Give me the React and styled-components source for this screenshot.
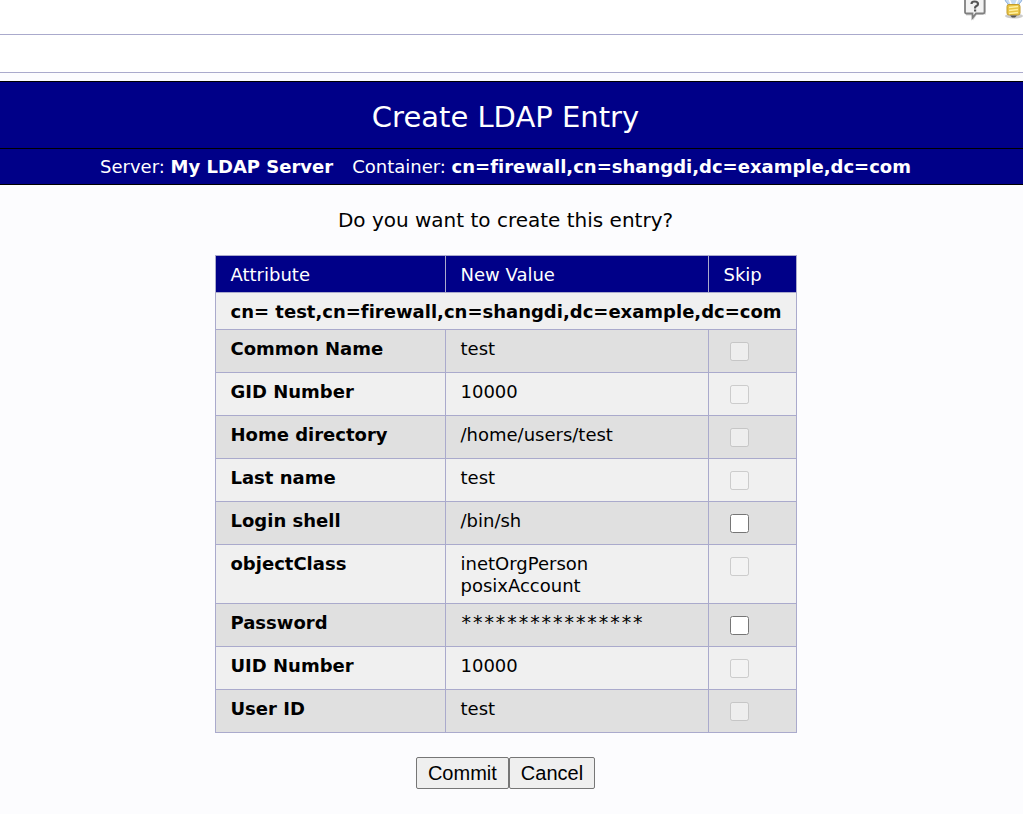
import React from "react";
import styled, { createGlobalStyle } from "styled-components";

const GlobalStyle = createGlobalStyle`
  body {
    margin: 0;
    background: #fcfcfe;
    color: #000;
    font-family: "DejaVu Sans", Verdana, sans-serif;
    font-size: 18px;
    font-variant-ligatures: none;
    line-height: 22px;
  }
`;

const TopBar = styled.header`
  display: flex;
  justify-content: flex-end;
  gap: 17px;
  height: 34px;
  overflow: hidden;
  background: #fff;
  border-bottom: 1px solid #aaaacc;
`;

const IconLink = styled.a`
  display: block;
  height: 24px;

  svg {
    display: block;
  }
`;

const SubBar = styled.div`
  height: 37px;
  margin-bottom: 8px;
  background: #fff;
  border-bottom: 1px solid #aaaacc;
`;

const Title = styled.h1`
  margin: 0;
  padding: 18px 12px 14px 0;
  border-top: 1px solid #000;
  background: #000088;
  color: #fff;
  font-size: 29px;
  font-weight: normal;
  line-height: 34px;
  text-align: center;
`;

const SubTitle = styled.div`
  display: flex;
  justify-content: center;
  gap: 19px;
  padding: 7px 12px 6px 0;
  border-top: 1px solid #000;
  border-bottom: 1px solid #000;
  background: #000088;
  color: #fff;
`;

const Form = styled.form`
  display: flex;
  flex-direction: column;
  align-items: center;
  padding: 23px 12px 24px 0;
`;

const Question = styled.p`
  margin: 0 0 23px;
  font-size: 20px;
  line-height: 24px;
`;

const Table = styled.table`
  border-collapse: collapse;
  border: 1px solid #aaaacc;
`;

const HeadCell = styled.th`
  width: ${(props) => props.$width}px;
  box-sizing: border-box;
  padding: 8px 15px 6px;
  border: 1px solid #aaaacc;
  background: #000088;
  color: #fff;
  font-weight: normal;
  text-align: left;
`;

const Row = styled.tr`
  background: ${(props) => (props.$shaded ? "#e0e0e0" : "#f0f0f0")};
`;

const Cell = styled.td`
  height: 28px;
  padding: 8px 15px 6px;
  border: 1px solid #aaaacc;
  font-weight: ${(props) => (props.$bold ? "bold" : "normal")};
  text-align: left;
  vertical-align: top;
`;

const DnCell = styled(Cell)`
  height: 22px;
  padding-right: 8px;
  white-space: nowrap;
`;

const Value = styled.div`
  height: 22px;
  ${(props) => props.$masked && 'font-family: "DejaVu Sans Mono", monospace; font-size: 19px; line-height: 20px;'}
`;

const Checkbox = styled.input`
  display: block;
  width: 19px;
  height: 19px;
  margin: 4px 6px 5px;
`;

const Buttons = styled.div`
  display: flex;
  margin-top: 24px;
`;

const Button = styled.button`
  height: 32px;
  padding: 0 11px;
  border: 1px solid #767676;
  border-radius: 2px;
  background: #efefef;
  color: #000;
  font-family: "Liberation Sans", Arial, sans-serif;
  font-size: 20px;
`;

const attributes = [
  { name: "Common Name", values: ["test"] },
  { name: "GID Number", values: ["10000"] },
  { name: "Home directory", values: ["/home/users/test"] },
  { name: "Last name", values: ["test"] },
  { name: "Login shell", values: ["/bin/sh"], canSkip: true },
  { name: "objectClass", values: ["inetOrgPerson", "posixAccount"] },
  { name: "Password", values: ["****************"], canSkip: true, masked: true },
  { name: "UID Number", values: ["10000"] },
  { name: "User ID", values: ["test"] },
];

function HelpIcon() {
  return (
    <svg width="24" height="24" viewBox="0 0 24 24">
      <path d="M3 -6H23V14.500H14L10 20.500V15.500H3Z" fill="#bbb" opacity="0.6" />
      <path
        d="M2 -6H21.500V12Q21.500 13.500 20 13.500H13L9.500 18V13.500H3.500Q2 13.500 2 12Z"
        fill="#f3f3f3"
        stroke="#808080"
        strokeWidth="1.800"
      />
      <path d="M8.500 4Q8.500 1.500 11.500 1.500Q15 1.500 15 4Q15 5.500 13 6.300Q12 6.800 12 8.500" fill="none" stroke="#555" strokeWidth="2.200" />
      <rect x="11" y="9.500" width="2.200" height="2" fill="#555" />
    </svg>
  );
}

function BulbIcon() {
  return (
    <svg width="19" height="24" viewBox="0 0 19 24">
      <ellipse cx="10" cy="16" rx="9" ry="2.500" fill="#999" opacity="0.5" />
      <path d="M0 -4Q1 2 4 4V7H15V4Q18 2 19 -4Z" fill="#c6dcf4" stroke="#8aaedb" />
      <path d="M5 -1L7.500 5M14 -1L11.500 5" stroke="#fff" strokeWidth="1.500" />
      <rect x="3" y="4.500" width="13" height="10.500" rx="2" fill="#e9c545" stroke="#c39c2c" />
      <path d="M5 7.500L14 6.500M5 10.500L14 9.500M5 13.500L14 12.500" stroke="#fff0a0" strokeWidth="1.300" />
      <path d="M6 15.500H13L11 17.500H8Z" fill="#555" />
    </svg>
  );
}

export default function App() {
  return (
    <>
      <GlobalStyle />
      <TopBar>
        <IconLink href="#help" aria-label="Help">
          <HelpIcon />
        </IconLink>
        <IconLink href="#hints" aria-label="Hints">
          <BulbIcon />
        </IconLink>
      </TopBar>
      <SubBar />
      <main>
        <Title>Create LDAP Entry</Title>
        <SubTitle>
          <span>
            Server: <b>My LDAP Server</b>
          </span>
          <span>
            Container: <b>cn=firewall,cn=shangdi,dc=example,dc=com</b>
          </span>
        </SubTitle>
        <Form onSubmit={(e) => e.preventDefault()}>
          <Question>Do you want to create this entry?</Question>
          <Table>
            <thead>
              <tr>
                <HeadCell $width={230}>Attribute</HeadCell>
                <HeadCell $width={263}>New Value</HeadCell>
                <HeadCell $width={88}>Skip</HeadCell>
              </tr>
            </thead>
            <tbody>
              <Row>
                <DnCell colSpan={3} $bold>
                  cn= test,cn=firewall,cn=shangdi,dc=example,dc=com
                </DnCell>
              </Row>
              {attributes.map((attr, i) => (
                <Row key={attr.name} $shaded={i % 2 === 0}>
                  <Cell as="th" scope="row" $bold>
                    {attr.name}
                  </Cell>
                  <Cell>
                    {attr.values.map((value) => (
                      <Value key={value} $masked={attr.masked}>
                        {value}
                      </Value>
                    ))}
                  </Cell>
                  <Cell>
                    <Checkbox type="checkbox" aria-label={`Skip ${attr.name}`} disabled={!attr.canSkip} />
                  </Cell>
                </Row>
              ))}
            </tbody>
          </Table>
          <Buttons>
            <Button type="submit">Commit</Button>
            <Button type="button">Cancel</Button>
          </Buttons>
        </Form>
      </main>
    </>
  );
}
